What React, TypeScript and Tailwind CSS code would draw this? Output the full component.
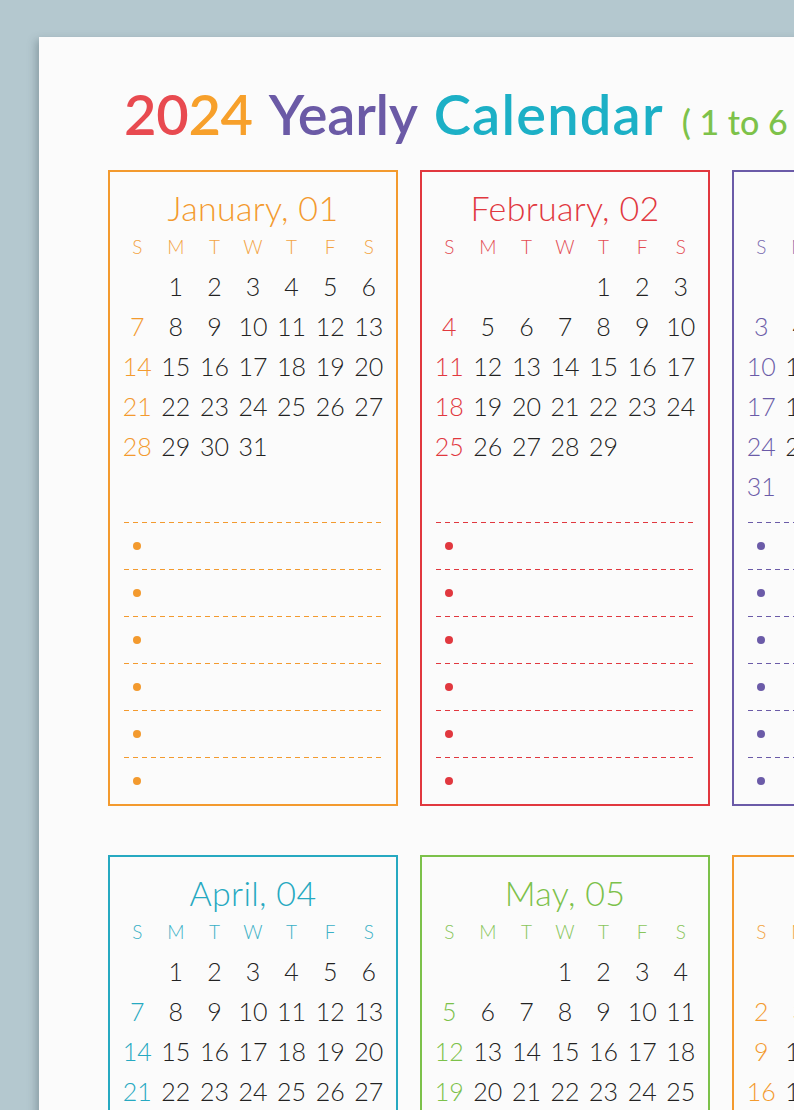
import React from 'react';

type Month = {
  name: string;
  start: number; // weekday of the 1st, 0 = Sunday
  days: number;
  text: string;
  border: string;
  bg: string;
};

const months: Month[] = [
  { name: 'January, 01', start: 1, days: 31, text: 'text-[#f39a2e]', border: 'border-[#f39a2e]', bg: 'bg-[#f39a2e]' },
  { name: 'February, 02', start: 4, days: 29, text: 'text-[#e1383f]', border: 'border-[#e1383f]', bg: 'bg-[#e1383f]' },
  { name: 'March, 03', start: 5, days: 31, text: 'text-[#6b5ba8]', border: 'border-[#6b5ba8]', bg: 'bg-[#6b5ba8]' },
  { name: 'April, 04', start: 1, days: 30, text: 'text-[#26a9c1]', border: 'border-[#26a9c1]', bg: 'bg-[#26a9c1]' },
  { name: 'May, 05', start: 3, days: 31, text: 'text-[#7cc14a]', border: 'border-[#7cc14a]', bg: 'bg-[#7cc14a]' },
  { name: 'June, 06', start: 6, days: 30, text: 'text-[#f39a2e]', border: 'border-[#f39a2e]', bg: 'bg-[#f39a2e]' },
];

const weekdays = ['S', 'M', 'T', 'W', 'T', 'F', 'S'];

const MonthCard: React.FC<{ m: Month }> = ({ m }) => {
  const cells: (number | null)[] = [];
  for (let i = 0; i < m.start; i++) cells.push(null);
  for (let d = 1; d <= m.days; d++) cells.push(d);

  return (
    <div className={`w-[290px] h-[636px] shrink-0 border-2 ${m.border} flex flex-col`}>
      {/* Month name */}
      <div className={`pt-[16px] text-center text-[34px] leading-[40px] font-light tracking-[0.3px] ${m.text}`}>{m.name}</div>

      {/* Weekday header */}
      <div className={`mt-[9px] px-[8px] grid grid-cols-7 text-center text-[19px] leading-[20px] font-light opacity-90 ${m.text}`}>
        {weekdays.map((w, i) => (
          <span key={i}>{w}</span>
        ))}
      </div>

      {/* Dates */}
      <div className="mt-[9px] px-[8px] grid grid-cols-7 text-center text-[25px] leading-[40px] font-light text-[#222]">
        {cells.map((d, i) => (
          <span key={i} className={i % 7 === 0 ? m.text : ''}>
            {d ?? ''}
          </span>
        ))}
      </div>

      {/* Notes */}
      <div className={`mt-auto px-[14px] ${m.text}`}>
        {[0, 1, 2, 3, 4, 5].map((n) => (
          <div key={n} className="h-[47px]">
            <div className="h-px bg-[repeating-linear-gradient(90deg,currentColor_0_5px,transparent_5px_9px)]" />
            <div className={`ml-[9px] mt-[19px] w-[8px] h-[8px] rounded-full ${m.bg}`} />
          </div>
        ))}
      </div>
    </div>
  );
};

const App: React.FC = () => {
  return (
    <div className="w-[794px] h-[1110px] overflow-hidden bg-[#b4c8cf] pl-[39px] pt-[37px] font-['Lato','Noto_Sans',sans-serif]">
      <div className="w-[1000px] h-[1200px] bg-[#fbfbfb] shadow-[-3px_3px_8px_rgba(60,80,90,0.35)] pt-[49px] pl-[69px]">
        {/* Heading */}
        <h1 className="pl-[16px] whitespace-nowrap leading-none font-semibold text-[56px] tracking-[-0.3px]">
          <span className="text-[#e84a50]">20</span>
          <span className="text-[#f7a02b]">24</span>
          <span className="text-[#6b5aa6] ml-[16px]">Yearly</span>
          <span className="text-[#1cb0c6] ml-[16px] tracking-[1.2px]">Calendar</span>
          <span className="text-[#7dc24a] ml-[18px] text-[34px] font-medium tracking-normal">( 1 to 6 )</span>
        </h1>

        {/* Month grid */}
        <div className="mt-[28px] flex flex-col gap-[49px]">
          <div className="flex gap-[22px]">
            {months.slice(0, 3).map((m) => (
              <MonthCard key={m.name} m={m} />
            ))}
          </div>
          <div className="flex gap-[22px]">
            {months.slice(3, 6).map((m) => (
              <MonthCard key={m.name} m={m} />
            ))}
          </div>
        </div>
      </div>
    </div>
  );
};

export default App;
